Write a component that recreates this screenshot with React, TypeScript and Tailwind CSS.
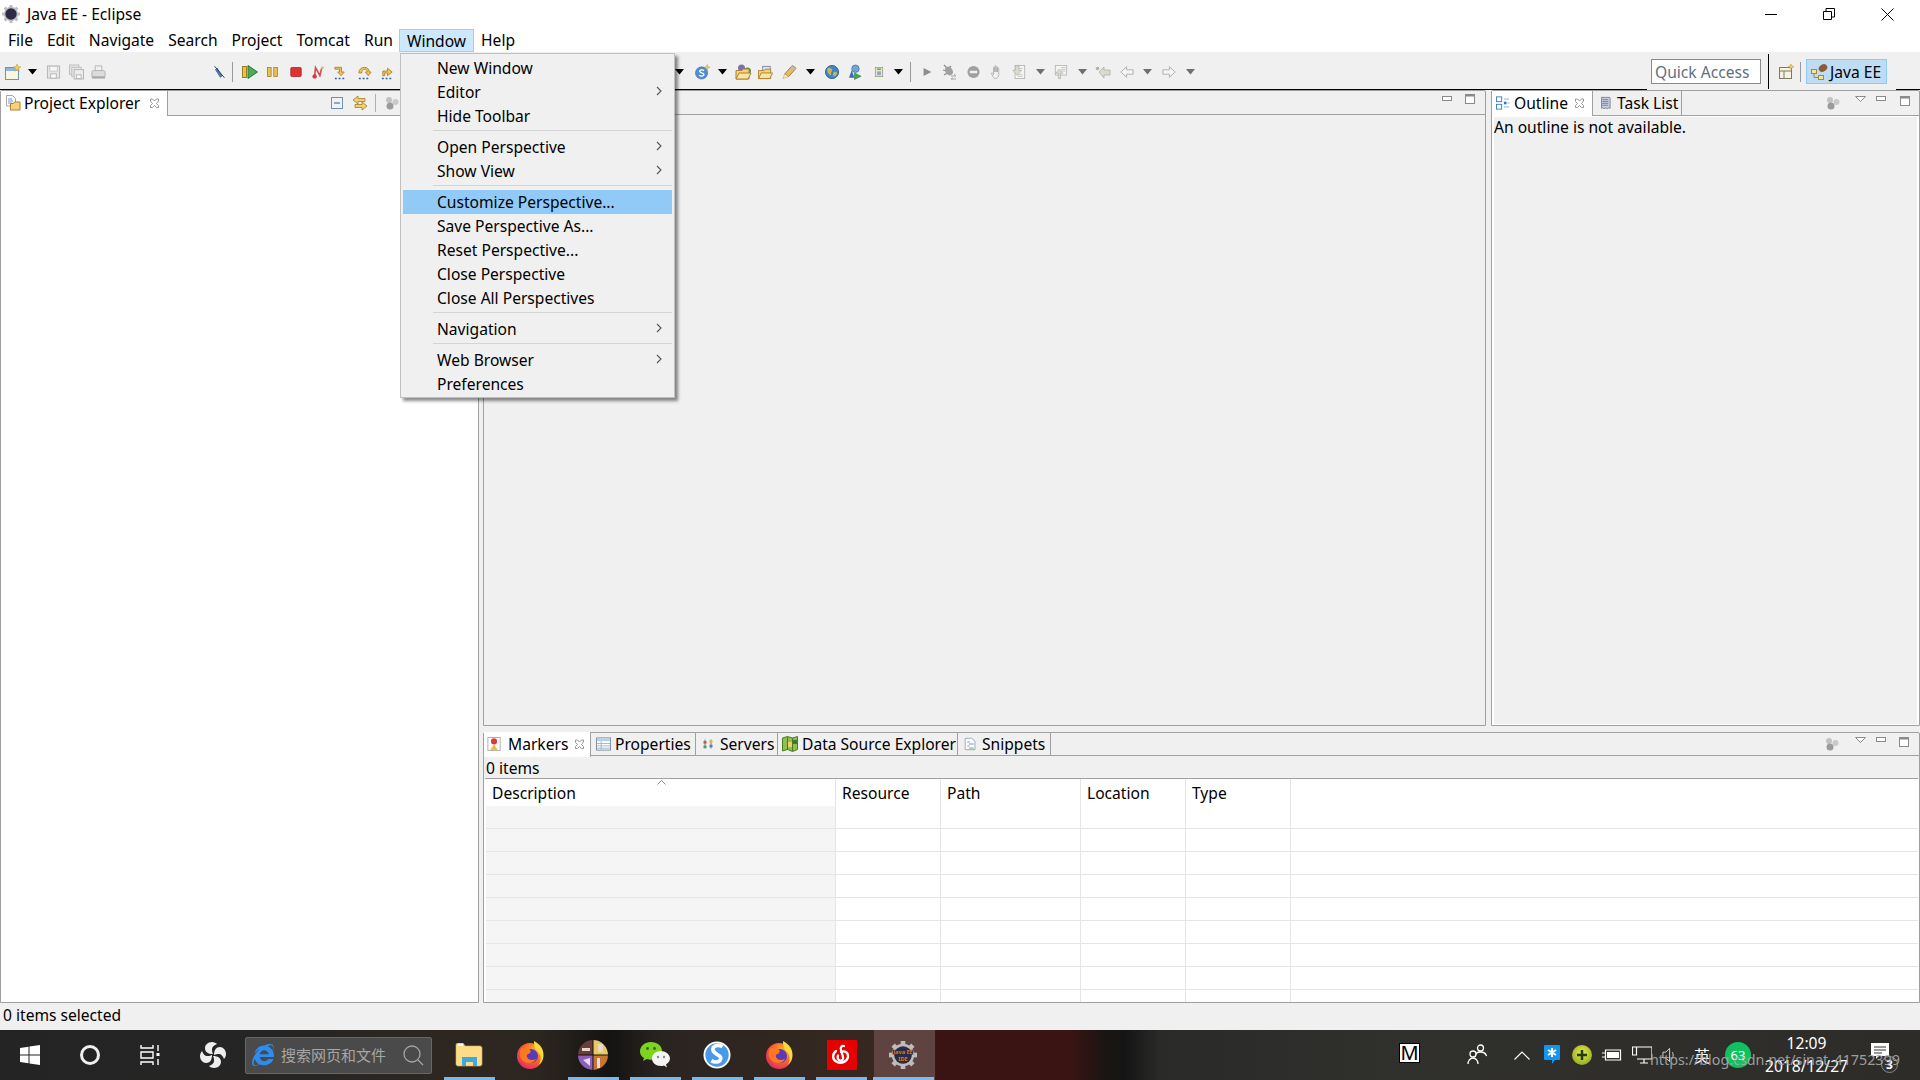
import React from "react";
import { FaInternetExplorer } from "react-icons/fa";

type P = { className?: string };
const Arrow = ({ className = "", grey = false }: P & { grey?: boolean }) => (
  <svg viewBox="0 0 9 6" className={"w-[9px] h-[6px] shrink-0 " + className}>
    <path d="M0 0h9L4.5 5.5z" fill={grey ? "#6f6f6f" : "#000"} />
  </svg>
);
const Box16 = ({ className = "", w = "w-[16px] h-[16px]", children }: P & { w?: string; children: React.ReactNode }) => (
  <svg viewBox="0 0 16 16" className={w + " shrink-0 " + className}>{children}</svg>
);
const NewIcon = ({ className }: P) => (
  <Box16 className={className}>
    <rect x="0.5" y="3.5" width="13" height="12" fill="#fbf6df" stroke="#6b93b5" />
    <rect x="1" y="4" width="12" height="3" fill="#8db8dc" />
    <path d="M12 0l1 2.5L15.8 3l-2.3 1.6.8 2.6L12 5.6 9.8 7.2l.7-2.6L8.4 3l2.6-.5z" fill="#f6cf57" stroke="#b8902a" strokeWidth=".5" />
  </Box16>
);
const Floppy = ({ className, w }: P & { w?: string }) => (
  <Box16 className={className} w={w ?? "w-[15px] h-[16px]"}>
    <rect x="1.5" y="1.5" width="13" height="13" fill="#e6e6e6" stroke="#b4b4b4" />
    <rect x="4" y="2" width="8" height="5" fill="#f6f6f6" stroke="#bcbcbc" strokeWidth=".7" />
    <rect x="5" y="10" width="6" height="4.5" fill="#fafafa" stroke="#b4b4b4" />
  </Box16>
);
const FloppyAll = ({ className }: P) => (
  <Box16 className={className} w="w-[15px] h-[16px]">
    <rect x=".5" y=".5" width="10" height="10" fill="#e6e6e6" stroke="#bcbcbc" />
    <rect x="3" y="3" width="10" height="10" fill="#e6e6e6" stroke="#bcbcbc" />
    <rect x="5.5" y="5.5" width="10" height="10" fill="#ececec" stroke="#b4b4b4" />
    <rect x="8" y="11" width="5" height="4" fill="#fafafa" stroke="#b4b4b4" />
  </Box16>
);
const Printer = ({ className }: P) => (
  <Box16 className={className} w="w-[15px] h-[16px]">
    <path d="M4.5 1.5h7v6h-7z" fill="#f1f1f1" stroke="#b4b4b4" />
    <path d="M1 8c0-1 1-1.500 2-1.500h10c1 0 2 .5 2 1.500v5H1z" fill="#dcdcdc" stroke="#b0b0b0" />
    <rect x="1" y="13" width="14" height="2" fill="#a9a9a9" />
  </Box16>
);
const SkipIcon = ({ className }: P) => (
  <Box16 className={className} w="w-[13px] h-[16px]">
    <path d="M5 3l6 10-2 1.500L3 5z" fill="#5a7fb0" stroke="#2b4e80" strokeWidth=".8" />
    <path d="M2 1l12 14" stroke="#1d3d70" strokeWidth="1.200" />
  </Box16>
);
const Resume = ({ className }: P) => (
  <Box16 className={className}>
    <rect x=".5" y="2.500" width="4" height="11" fill="#e9c14f" stroke="#9c7c22" />
    <path d="M6 1.500L15.500 8 6 14.500z" fill="#4caa58" stroke="#2a7b3a" />
  </Box16>
);
const Pause = ({ className }: P) => (
  <Box16 className={className} w="w-[12px] h-[16px]">
    <rect x=".5" y="2" width="5" height="12" fill="#e9c14f" stroke="#9c7c22" />
    <rect x="9" y="2" width="5" height="12" fill="#e9c14f" stroke="#9c7c22" />
  </Box16>
);
const Stop = ({ className }: P) => (
  <Box16 className={className} w="w-[12px] h-[16px]">
    <rect x="1" y="2" width="14" height="12" rx="1.500" fill="#dd3333" stroke="#a51f1f" />
  </Box16>
);
const Disconnect = ({ className }: P) => (
  <Box16 className={className} w="w-[14px] h-[16px]">
    <path d="M3 13L4 3l5 9 2-8" fill="none" stroke="#d34a4a" strokeWidth="1.800" />
    <circle cx="3" cy="13" r="2.500" fill="#d33" />
    <path d="M11 1l3 2-3 2z" fill="#e9a94f" />
  </Box16>
);
const Step = ({ className, d }: P & { d: string }) => (
  <Box16 className={className} w="w-[15px] h-[16px]">
    <path d={d} fill="#f0c364" stroke="#b5852a" strokeWidth="1" />
    <path d="M2 15h2M6 15h2M10 15h2" stroke="#2c5f9e" strokeWidth="1.500" />
  </Box16>
);
const BlueS = ({ className }: P) => (
  <Box16 className={className} w="w-[15px] h-[16px]">
    <circle cx="7" cy="9" r="6.500" fill="#4f8fd0" stroke="#2c64a4" strokeWidth=".6" />
    <path d="M9.500 6.500C8 5.200 4.800 5.500 5 7.500c.2 1.800 4.500 1 4.500 3.200 0 2-3.500 2.200-5 .8" fill="none" stroke="#fff" strokeWidth="1.500" />
    <path d="M13 0l.8 2.200L16 3l-2.200.8L13 6l-.8-2.200L10 3l2.200-.8z" fill="#f3cf5b" stroke="#a98523" strokeWidth=".4" />
  </Box16>
);
const FolderOpen = ({ className, w, extra }: P & { w?: string; extra?: React.ReactNode }) => (
  <Box16 className={className} w={w ?? "w-[17px] h-[16px]"}>
    {extra}
    <path d="M.5 6.500h6l1-1.500h6v10H.5z" fill="#f5d27c" stroke="#b0812e" />
    <path d="M.5 15l3-6h12l-3 6z" fill="#fbe3a3" stroke="#b0812e" />
  </Box16>
);
const Pencil = ({ className }: P) => (
  <Box16 className={className} w="w-[15px] h-[16px]">
    <path d="M3 10l8-9 4 3-8 9z" fill="#eab869" stroke="#9c7a3a" />
    <path d="M10 2l4 3" stroke="#bbb" strokeWidth="2" />
    <path d="M3 10l-2 5 6-2z" fill="#fff6b8" stroke="#aaa36b" strokeWidth=".6" />
  </Box16>
);
const Globe = ({ className }: P) => (
  <Box16 className={className} w="w-[14px] h-[16px]">
    <circle cx="8" cy="8" r="7.500" fill="#3f86c8" stroke="#2a5c92" />
    <path d="M4 3c2 0 3 1 4 2S6 9 7 11s-3 0-4-3 0-5 1-5zM10 8c2-1 3 0 4 1-1 3-3 4-4 4s-1-3 0-5z" fill="#c9b65a" />
  </Box16>
);
const Runner = ({ className }: P) => (
  <Box16 className={className} w="w-[15px] h-[16px]">
    <circle cx="9" cy="4.500" r="4" fill="#6ea6d6" stroke="#3b6b9d" strokeWidth=".7" />
    <path d="M2 14L5 6l3 8z" fill="#3a6eb0" />
    <path d="M8 9l7 3.500-7 3.500z" fill="#43a255" stroke="#2a7b3a" strokeWidth=".6" />
  </Box16>
);
const ServerI = ({ className }: P) => (
  <Box16 className={className} w="w-[10px] h-[16px]">
    <rect x="2" y="0.500" width="12" height="15" fill="#e7e4c8" stroke="#8a8a66" />
    <rect x="5" y="2.500" width="6" height="2" fill="#3da04f" />
    <rect x="5" y="7" width="6" height="6" fill="#8aa6d2" />
  </Box16>
);
const GPlay = ({ className }: P) => (
  <Box16 className={className} w="w-[9px] h-[16px]">
    <path d="M1 1l14 7-14 7z" fill="#8e8e8e" />
  </Box16>
);
const GBug = ({ className }: P) => (
  <Box16 className={className}>
    <path d="M2 1l4 4M1 6l3 1M2 11l3-2M9 2L7 4" stroke="#909090" strokeWidth="1.300" />
    <ellipse cx="7" cy="7" rx="3.500" ry="4.500" fill="#a0a0a0" transform="rotate(-35 7 7)" />
    <path d="M9 12h5l-2-2M14 15H9l2-1" stroke="#a5a5a5" fill="none" />
  </Box16>
);
const GMinus = ({ className }: P) => (
  <Box16 className={className} w="w-[13px] h-[16px]">
    <circle cx="8" cy="8" r="7.500" fill="#a0a0a0" />
    <rect x="3.500" y="6.500" width="9" height="3" fill="#f0f0f0" />
  </Box16>
);
const GHand = ({ className }: P) => (
  <Box16 className={className} w="w-[14px] h-[16px]">
    <path d="M4 9V3c0-1 1.500-1 1.500 0v5V1.500c0-1 1.500-1 1.500 0V8V2.500c0-1 1.500-1 1.500 0V8V4c0-1 1.500-1 1.500 0v7c0 3-2 4.500-4 4.500S4 14 2.500 11.500 1.500 9 2.500 9 4 11 4 11z" fill="#f0f0f0" stroke="#a8a8a8" strokeWidth=".9" />
  </Box16>
);
const GStep = ({ className }: P) => (
  <Box16 className={className} w="w-[14px] h-[16px]">
    <rect x="3.500" y=".5" width="11" height="15" fill="#f4f4f4" stroke="#b5b5b5" />
    <path d="M7 4h5M7 11h5M7 13h5" stroke="#c4c4c4" />
    <path d="M4 1v5H1l5 6 5-6H8V1z" fill="#dedacb" stroke="#a9a9a9" strokeWidth=".7" />
  </Box16>
);
const GStepUp = ({ className }: P) => (
  <Box16 className={className} w="w-[14px] h-[16px]">
    <rect x="1.500" y=".5" width="13" height="11" fill="#f4f4f4" stroke="#b5b5b5" />
    <path d="M8 3h5M8 5h5M8 7h5" stroke="#c4c4c4" />
    <path d="M5 15.500v-6H2l4-5 4 5H7.500v6z" fill="#dedacb" stroke="#a9a9a9" strokeWidth=".7" />
  </Box16>
);
const GBackDoc = ({ className }: P) => (
  <Box16 className={className}>
    <circle cx="2.500" cy="4.500" r="1.800" fill="#b0b0b0" />
    <path d="M4 8l5-5v3h6v5H9v3z" fill="#dedacb" stroke="#ababab" strokeWidth=".8" />
  </Box16>
);
const GLeft = ({ className }: P) => (
  <Box16 className={className} w="w-[14px] h-[16px]">
    <path d="M1 8l6.500-6v3.500H15v5H7.500V14z" fill="#f4f4f4" stroke="#a9a9a9" />
  </Box16>
);
const GRight = ({ className }: P) => (
  <Box16 className={className} w="w-[14px] h-[16px]">
    <path d="M15 8L8.500 2v3.500H1v5h7.500V14z" fill="#f4f4f4" stroke="#a9a9a9" />
  </Box16>
);
const Sep = ({ className = "" }: P) => <div className={"w-[1px] h-[20px] bg-[#9a9a9a] shrink-0 " + className} />;

const Close = ({ className = "" }: P) => (
  <svg viewBox="0 0 11 11" className={"w-[11px] h-[11px] shrink-0 " + className}>
    <path d="M1.500 1h2L5.500 3 7.500 1h2v2L7.500 5.500l2 2v2h-2L5.500 7.500l-2 2h-2v-2L3.500 5.500l-2-2z" fill="#fff" stroke="#8c8c8c" strokeWidth=".9" />
  </svg>
);
const Cogs = ({ className = "" }: P) => (
  <svg viewBox="0 0 14 14" className={"w-[14px] h-[14px] shrink-0 " + className}>
    <circle cx="4" cy="4" r="3" fill="#c2c2c2" />
    <circle cx="10.500" cy="6" r="3" fill="#c9c9c9" />
    <circle cx="5" cy="10" r="3.500" fill="#9b9b9b" />
  </svg>
);
const ViewMenu = ({ className = "" }: P) => (
  <svg viewBox="0 0 11 6" className={"w-[11px] h-[6px] shrink-0 " + className}>
    <path d="M.5.500h10L5.500 5.500z" fill="#fff" stroke="#8c8c8c" />
  </svg>
);
const Min = ({ className = "" }: P) => (
  <svg viewBox="0 0 10 5" className={"w-[10px] h-[5px] shrink-0 " + className}>
    <rect x=".5" y=".5" width="9" height="4" fill="#fff" stroke="#8a8a8a" />
  </svg>
);
const Max = ({ className = "" }: P) => (
  <svg viewBox="0 0 10 10" className={"w-[10px] h-[10px] shrink-0 " + className}>
    <rect x=".5" y=".5" width="9" height="9" fill="#fff" stroke="#8a8a8a" />
    <rect x="1" y="1" width="8" height="1.500" fill="#8a8a8a" />
  </svg>
);

const ExplorerIcon = ({ className }: P) => (
  <Box16 className={className}>
    <path d="M1.500.5h6l3 3V11h-9z" fill="#fff" stroke="#a5a5a5" />
    <path d="M3 4h4M3 6h5M3 8h4" stroke="#6f9dc8" />
    <path d="M5.500 8.500h3l1-1.500h5.500v8h-9.500z" fill="#f6d27a" stroke="#b0812e" />
  </Box16>
);
const OutlineIcon = ({ className }: P) => (
  <Box16 className={className} w="w-[14px] h-[16px]">
    <rect x=".5" y="1" width="6" height="5.500" fill="#fff" stroke="#2c78c4" />
    <rect x=".5" y="9.500" width="6" height="5.500" fill="#fff" stroke="#2c78c4" />
    <rect x="9" y="6.500" width="3" height="3" fill="#2c78c4" />
    <path d="M9 3.500h6M13 8h2.500M9 12.500h6" stroke="#7ba9d6" />
  </Box16>
);
const TaskIcon = ({ className }: P) => (
  <Box16 className={className} w="w-[12px] h-[16px]">
    <path d="M2 .5h10.500c1 0 1 .5 1 1V15l-2-.5-2 1-2-1-2 1-2-1-1.500.5V1.500c0-.5.5-1 1-1z" fill="#c9cde0" stroke="#686d80" />
    <path d="M3 3.500h8M3 6h8M3 8.500h8M3 11h8" stroke="#686d80" />
  </Box16>
);
const MarkersIcon = ({ className }: P) => (
  <Box16 className={className} w="w-[14px] h-[16px]">
    <rect x="1" y=".5" width="14" height="15" fill="#fdfdfd" stroke="#a8a8a8" />
    <circle cx="8" cy="5" r="3.500" fill="#e0383c" />
    <path d="M8 8l4.500 7h-9z" fill="#edbb4c" />
  </Box16>
);
const PropsIcon = ({ className }: P) => (
  <Box16 className={className} w="w-[15px] h-[16px]">
    <rect x=".5" y="1.500" width="15" height="13" fill="#fff" stroke="#7d8c9c" />
    <rect x="1" y="2" width="14" height="3" fill="#b8cfe8" />
    <path d="M1 7.500h14M1 10h14M1 12.500h14M5.500 5v9" stroke="#99b4d0" />
  </Box16>
);
const ServersIcon = ({ className }: P) => (
  <Box16 className={className} w="w-[12px] h-[16px]">
    <path d="M4 2v12M12 2v12" stroke="#55778f" strokeWidth="1.200" />
    <rect x="2" y="4" width="4" height="3.500" fill="#d6504e" />
    <rect x="2" y="10" width="4" height="3.500" fill="#4e9f52" />
    <rect x="10" y="3" width="4" height="3.500" fill="#e0b743" />
    <rect x="10" y="9" width="4" height="3.500" fill="#4e7fc4" />
  </Box16>
);
const DataIcon = ({ className }: P) => (
  <Box16 className={className}>
    <path d="M.5 2l5-1.500 5 1.500 5-1.500v13l-5 2-5-2-5 1.500z" fill="#8ec04f" stroke="#4d7a2a" />
    <path d="M5.500 1v13M10.500 2v13" stroke="#4d7a2a" />
    <rect x="6" y="6" width="4" height="5" fill="#e5d36a" />
    <rect x="11" y="4" width="4" height="4" fill="#3b7a35" />
  </Box16>
);
const SnippetsIcon = ({ className }: P) => (
  <Box16 className={className} w="w-[13px] h-[16px]">
    <path d="M1.500 1h8l4 3.500V15h-12z" fill="#fff" stroke="#8a9aa8" />
    <path d="M4 5.500h3M6 8h6" stroke="#3d7dc0" />
    <path d="M4 10.500h3" stroke="#d66" />
    <path d="M6 13h6" stroke="#3aa05a" />
  </Box16>
);

const Tab = ({ active, icon, label, close, closeGap = "ml-[7px]", className = "" }: { active?: boolean; icon: React.ReactNode; label: string; close?: boolean; closeGap?: string; className?: string }) => (
  <div className={"h-[24px] flex items-center shrink-0 border-r border-[#a0a0a0] " + (active ? "bg-white -mb-[1px] h-[25px] pb-[1px] " : "") + className}>
    {icon}
    <span className="whitespace-nowrap">{label}</span>
    {close && <Close className={closeGap} />}
  </div>
);

const ItemRow = ({ label, sub, hi }: { label: string; sub?: boolean; hi?: boolean }) => (
  <div className={"h-[24px] mx-[2px] pl-[34px] pr-[10px] flex items-center justify-between " + (hi ? "bg-[#91c9f7]" : "")}>
    <span className="whitespace-nowrap">{label}</span>
    {sub && (
      <svg viewBox="0 0 6 10" className="w-[6px] h-[10px] -mt-[2px]">
        <path d="M1 1l4 4-4 4" fill="none" stroke="#555" strokeWidth="1.100" />
      </svg>
    )}
  </div>
);
const MenuSep = () => <div className="mt-[2px] mb-[4px] h-[1px] ml-[32px] mr-[2px] bg-[#d4d4d4]" />;

const Gear = ({ className = "", tiny = false }: P & { tiny?: boolean }) => (
  <svg viewBox="0 0 30 30" className={className}>
    {[0, 45, 90, 135, 180, 225, 270, 315].map((a) => (
      <rect key={a} x="12.500" y="0" width="5" height="6" fill="#bdbdbd" transform={`rotate(${a} 15 15)`} />
    ))}
    <circle cx="15" cy="15" r="12" fill="#bdbdbd" />
    <circle cx="15" cy="15" r="9.500" fill="#2c2a45" />
    {tiny && (
      <>
        <rect x="4" y="9.500" width="22" height="5" fill="#2c2a45" />
        <text x="15" y="14" textAnchor="middle" fontSize="6" fontWeight="700" fill="#d97a1e">Java EE</text>
        <text x="15" y="21" textAnchor="middle" fontSize="6" fontWeight="700" fill="#d97a1e">IDE</text>
      </>
    )}
  </svg>
);
const Firefox = ({ className = "", id }: P & { id: string }) => (
  <svg viewBox="0 0 28 28" className={"w-[28px] h-[28px] shrink-0 " + className}>
    <defs>
      <radialGradient id={id} cx=".65" cy=".3" r=".9">
        <stop offset="0" stopColor="#ffb52c" />
        <stop offset=".5" stopColor="#ff5a2a" />
        <stop offset="1" stopColor="#c41d86" />
      </radialGradient>
    </defs>
    <circle cx="14" cy="15" r="13" fill={`url(#${id})`} />
    <path d="M18 0c6 3 10 8 9.500 15-.2 4-2 7-5 9 2-3 3-7 1-11-1-2-4-4-5-7-.4-2-.5-4-.5-6z" fill="#ffd93b" />
    <circle cx="15" cy="15" r="7" fill="#5b3bb5" />
    <path d="M6 7c2 1 5 0 7 1s2 3 1 4-4 1-3 4 5 4 9 2c-2 4-7 5-11 3S3 15 4 11c.3-1.500 1-3 2-4z" fill="#ff7a1f" />
  </svg>
);

const Panel = ({ className = "", children }: { className?: string; children: React.ReactNode }) => (
  <div className={"border border-[#a0a0a0] rounded-t-[2px] flex flex-col min-h-0 bg-[#f0f0f0] " + className}>{children}</div>
);

const Bar = ({ className = "" }: P) => <div className={"absolute bottom-0 w-[51px] h-[3px] bg-[#76b9ed] " + className} />;

export default function App() {
  const cols = ["w-[350px]", "w-[105px]", "w-[140px]", "w-[105px]", "w-[105px]"];
  const heads = ["Description", "Resource", "Path", "Location", "Type"];
  return (
    <div className="w-[1920px] h-[1080px] relative overflow-hidden flex flex-col bg-[#f0f0f0] text-black text-[15.6px] leading-[20px] [font-family:'Noto_Sans','Noto_Sans_CJK_SC',sans-serif]">
      {/* title bar */}
      <div className="h-[26px] bg-white flex items-center shrink-0 pt-[2px]">
        <Gear className="w-[18px] h-[18px] ml-[2px]" />
        <span className="ml-[7px]">Java EE - Eclipse</span>
        <svg viewBox="0 0 12 1" className="ml-auto w-[12px] h-[1px]"><rect width="12" height="1" fill="#000" /></svg>
        <svg viewBox="0 0 12 12" className="ml-[46px] w-[12px] h-[12px]"><path d="M.5 3.500h8v8h-8zM3 3.500V.5h8.500V9H8.500" fill="none" stroke="#000" /></svg>
        <svg viewBox="0 0 13 13" className="ml-[46px] mr-[26px] w-[13px] h-[13px]"><path d="M.5.500l12 12M12.500.5l-12 12" stroke="#000" /></svg>
      </div>
      {/* menu bar */}
      <div className="h-[26px] bg-white flex items-center pl-[1px] shrink-0">
        {["File", "Edit", "Navigate", "Search", "Project", "Tomcat", "Run"].map((m) => (
          <span key={m} className="px-[7px] mt-[2px]">{m}</span>
        ))}
        <span className="px-[7px] h-[23px] mt-[3px] flex items-center bg-[#cce8ff] border border-[#99d1ff] -ml-[1px]">Window</span>
        <span className="px-[7px] mt-[2px]">Help</span>
      </div>
      {/* toolbar */}
      <div className="h-[37px] flex items-center pt-[2px] shrink-0">
        <NewIcon className="ml-[5px]" />
        <Arrow className="ml-[7px]" />
        <Floppy className="ml-[9px]" />
        <FloppyAll className="ml-[8px]" />
        <Printer className="ml-[7px]" />
        <SkipIcon className="ml-[107px]" />
        <Sep className="ml-[6px]" />
        <Resume className="ml-[9px]" />
        <Pause className="ml-[9px]" />
        <Stop className="ml-[11px]" />
        <Disconnect className="ml-[10px]" />
        <Step className="ml-[7px]" d="M2 3h7v5h3l-3.500 4L5 8h2V5H2z" />
        <Step className="ml-[9px]" d="M2 9c0-4 3-6 6-6s5 2 5 5h2l-3 4-3-4h2c0-2-1-3-3-3s-3 2-3 4z" />
        <Step className="ml-[8px]" d="M3 12V7h5V4l5 4-5 4V9H5v3z" />
        <Arrow className="ml-[280px]" />
        <BlueS className="ml-[11px]" />
        <Arrow className="ml-[8px]" />
        <FolderOpen className="ml-[8px]" extra={<><circle cx="6" cy="4" r="3.500" fill="#7b6fb0" /><circle cx="12" cy="7" r="3.500" fill="#4a9a58" /></>} />
        <FolderOpen className="ml-[6px]" w="w-[15px] h-[16px]" extra={<rect x="5" y="2" width="8" height="6" fill="#dfe6f2" stroke="#7a8ba5" />} />
        <Pencil className="ml-[9px]" />
        <Arrow className="ml-[9px]" />
        <Globe className="ml-[10px]" />
        <Runner className="ml-[8px]" />
        <ServerI className="ml-[12px]" />
        <Arrow className="ml-[10px]" />
        <Sep className="ml-[7px]" />
        <GPlay className="ml-[12px]" />
        <GBug className="ml-[10px]" />
        <GMinus className="ml-[9px]" />
        <GHand className="ml-[10px]" />
        <GStep className="ml-[8px]" />
        <Arrow grey className="ml-[10px]" />
        <GStepUp className="ml-[9px]" />
        <Arrow grey className="ml-[10px]" />
        <GBackDoc className="ml-[8px]" />
        <GLeft className="ml-[9px]" />
        <Arrow grey className="ml-[9px]" />
        <GRight className="ml-[10px]" />
        <Arrow grey className="ml-[10px]" />
        <div className="ml-auto w-[110px] h-[25px] bg-white border border-[#8a8a8a] flex items-center pl-[3px] text-[#5f6f80]">Quick Access</div>
        <div className="ml-[7px] w-[1px] self-stretch bg-black" />
        <svg viewBox="0 0 15 16" className="ml-[10px] w-[15px] h-[16px]">
          <rect x=".5" y="3.500" width="12" height="11" fill="#f7f1dd" stroke="#7a7a66" />
          <path d="M1 7h11M5 7v7" stroke="#7a7a66" />
          <path d="M12 0l1 2 2 .8-2 .8-1 2-1-2-2-.8 2-.8z" fill="#f3cf5b" stroke="#a98523" strokeWidth=".4" />
        </svg>
        <Sep className="ml-[6px]" />
        <div className="ml-[5px] mr-[33px] w-[81px] h-[25px] bg-[#bfdcf5] border border-[#90c8f6] flex items-center pl-[4px]">
          <svg viewBox="0 0 17 16" className="w-[17px] h-[16px] shrink-0">
            <ellipse cx="12" cy="4" rx="4.500" ry="3.500" fill="#8a5a3a" transform="rotate(-30 12 4)" />
            <rect x=".5" y="5.500" width="5" height="4" fill="#f6e3a0" stroke="#a88a2c" />
            <rect x="7.500" y="11.500" width="5" height="4" fill="#f6e3a0" stroke="#a88a2c" />
            <path d="M3 10v3.500h4" stroke="#a88a2c" fill="none" />
          </svg>
          <span className="ml-[2px] pt-[1px] whitespace-nowrap">Java EE</span>
        </div>
      </div>
      <div className="h-[1px] flex shrink-0">
        <div className="w-[1647px] bg-black" />
        <div className="w-[249px]" />
        <div className="w-[24px] bg-black" />
      </div>
      {/* workbench */}
      <div className="flex-1 min-h-0 flex">
        <Panel className="w-[479px]">
          <div className="h-[25px] flex items-center border-b border-[#a0a0a0] shrink-0">
            <Tab active label="Project Explorer" close closeGap="ml-[9px]" icon={<ExplorerIcon className="ml-[4px] mr-[3px]" />} className="w-[167px]" />
            <svg viewBox="0 0 12 12" className="ml-[163px] w-[12px] h-[12px]">
              <rect x=".5" y=".5" width="11" height="11" fill="#eef3f8" stroke="#6f8fb0" />
              <path d="M3 6h6" stroke="#2f5f90" />
            </svg>
            <svg viewBox="0 0 16 16" className="ml-[9px] w-[16px] h-[16px]">
              <path d="M6 1L1 5l5 4V6.500h7v-3H6z" fill="#f3d06f" stroke="#a07d22" strokeWidth=".8" />
              <path d="M10 7l5 4-5 4v-2.500H3v-3h7z" fill="#f3d06f" stroke="#a07d22" strokeWidth=".8" />
            </svg>
            <div className="ml-[7px] w-[1px] h-[18px] bg-[#b0b0b0]" />
            <Cogs className="ml-[9px]" />
          </div>
          <div className="flex-1 bg-white" />
        </Panel>
        <div className="ml-[4px] flex-1 min-w-0 flex flex-col">
          <div className="h-[636px] flex shrink-0">
            <Panel className="w-[1003px]">
              <div className="h-[24px] border-b border-[#a0a0a0] flex items-center justify-end shrink-0 pb-[8px]">
                <Min />
                <Max className="ml-[13px] mr-[10px]" />
              </div>
              <div className="flex-1" />
            </Panel>
            <Panel className="ml-[5px] flex-1 min-w-0">
              <div className="h-[25px] flex items-center border-b border-[#a0a0a0] shrink-0">
                <Tab active label="Outline" close closeGap="ml-[6px]" icon={<OutlineIcon className="ml-[4px] mr-[4px]" />} className="w-[101px] h-[25px]" />
                <Tab label="Task List" icon={<TaskIcon className="ml-[7px] mr-[5px]" />} className="w-[89px]" />
                <Cogs className="ml-[144px] -mt-[1px]" />
                <ViewMenu className="ml-[15px] -mt-[9px]" />
                <Min className="ml-[10px] -mt-[9px]" />
                <Max className="ml-[14px] -mt-[5px]" />
              </div>
              <div className="flex-1 bg-white px-[2px] py-[1px] flex flex-col min-h-0">
                <div className="flex-1 bg-[#f0f0f0]">An outline is not available.</div>
              </div>
            </Panel>
          </div>
          <Panel className="mt-[6px] flex-1 min-h-0">
            <div className="h-[23px] flex items-center border-b border-[#a0a0a0] shrink-0">
              <Tab active label="Markers" close closeGap="ml-[6px]" icon={<MarkersIcon className="ml-[3px] mr-[7px]" />} className="w-[107px] pr-[5px] h-[24px]" />
              <Tab label="Properties" icon={<PropsIcon className="ml-[5px] mr-[4px]" />} className="w-[105px]" />
              <Tab label="Servers" icon={<ServersIcon className="ml-[6px] mr-[6px]" />} className="w-[82px]" />
              <Tab label="Data Source Explorer" icon={<DataIcon className="ml-[4px] mr-[4px]" />} className="w-[180px]" />
              <Tab label="Snippets" icon={<SnippetsIcon className="ml-[6px] mr-[5px]" />} className="w-[93px]" />
              <Cogs className="ml-[774px]" />
              <ViewMenu className="ml-[16px] -mt-[9px]" />
              <Min className="ml-[10px] -mt-[9px]" />
              <Max className="ml-[13px] -mt-[5px]" />
            </div>
            <div className="h-[22px] pl-[1px] mx-[1px] mt-[1px] bg-[#f0f0f0] flex items-center shrink-0 border-b border-[#a0a0a0]">0 items</div>
            <div className="flex-1 min-h-0 bg-white pl-[2px] pr-[1px] pb-[1px] overflow-hidden relative">
              <div className="h-[27px] flex">
                {heads.map((h, i) => (
                  <div key={h} className={cols[i] + " shrink-0 h-full pl-[6px] flex items-center border-r border-[#e5e5e5]"}>{h}</div>
                ))}
              </div>
              <svg viewBox="0 0 9 5" className="absolute left-[173px] top-[1px] w-[9px] h-[5px]"><path d="M.5 4.500L4.500.5l4 4" fill="none" stroke="#8a8a8a" /></svg>
              {[0, 1, 2, 3, 4, 5, 6, 7, 8].map((r) => (
                <div key={r} className="h-[23px] flex border-b border-[#e5e5e5]">
                  <div className="w-[350px] shrink-0 bg-[#f5f5f5] border-r border-[#e5e5e5]" />
                  <div className="w-[105px] shrink-0 border-r border-[#e5e5e5]" />
                  <div className="w-[140px] shrink-0 border-r border-[#e5e5e5]" />
                  <div className="w-[105px] shrink-0 border-r border-[#e5e5e5]" />
                  <div className="w-[105px] shrink-0 border-r border-[#e5e5e5]" />
                </div>
              ))}
            </div>
          </Panel>
        </div>
      </div>
      {/* status */}
      <div className="h-[27px] pl-[3px] pb-[3px] flex items-center shrink-0">0 items selected</div>
      {/* taskbar */}
      <div className="h-[50px] shrink-0 flex items-center text-white bg-[linear-gradient(90deg,#242424_0px,#262524_300px,#2e2720_450px,#2c2620_540px,#141312_610px,#2a2421_660px,#362820_860px,#3a2420_934px,#3a1313_936px,#3a1413_1070px,#1a1513_1105px,#151515_1125px,#2a2a29_1160px,#30302d_1400px,#2e2c29_1920px)]">
        <svg viewBox="0 0 20 20" className="ml-[20px] w-[20px] h-[20px] shrink-0">
          <path d="M0 3l8.500-1.200V9.500H0zM9.500 1.600L20 0v9.500H9.500zM0 10.500h8.500v7.700L0 17zM9.500 10.500H20V20L9.500 18.400z" fill="#fff" />
        </svg>
        <div className="ml-[40px] w-[20px] h-[20px] rounded-full border-[3px] border-[#f0f0f0] shrink-0" />
        <svg viewBox="0 0 20 20" className="ml-[40px] w-[20px] h-[20px] shrink-0">
          <path d="M1 0v3h12V0M1 20v-3h12v3M1 7h12v6H1zM18 0v6M18 14v6" fill="none" stroke="#fff" strokeWidth="1.400" />
          <rect x="16.500" y="8" width="3" height="3" fill="#fff" />
        </svg>
        <svg viewBox="0 0 26 26" className="ml-[40px] w-[26px] h-[26px] shrink-0">
          <path d="M13 12C8 12 5 10 5 6c0-3 3-6 7-6 2 0 4 1 5 2-3 1-5 3-5 5 0 2 0 3 1 5zM14 13c0-5 2-8 6-8 3 0 6 3 6 7 0 2-1 4-2 5-1-3-3-5-5-5-2 0-3 0-5 1zM13 14c5 0 8 2 8 6 0 3-3 6-7 6-2 0-4-1-5-2 3-1 5-3 5-5 0-2 0-3-1-5zM12 13c0 5-2 8-6 8-3 0-6-3-6-7 0-2 1-4 2-5 1 3 3 5 5 5 2 0 3 0 5-1z" fill="#ededed" />
        </svg>
        <div className="ml-[19px] w-[187px] h-[37px] bg-[#4a4a4a] border border-[#666] rounded-[2px] flex items-center shrink-0">
          <FaInternetExplorer className="ml-[6px] w-[22px] h-[22px] text-[#2e8df0] shrink-0" />
          <span className="ml-[7px] w-[105px] text-[15px] text-[#a6a6a6] whitespace-nowrap">搜索网页和文件</span>
          <svg viewBox="0 0 21 21" className="ml-[17px] w-[21px] h-[21px] shrink-0">
            <circle cx="9" cy="9" r="8" fill="none" stroke="#a6a6a6" strokeWidth="1.300" />
            <path d="M15 15l5 5" stroke="#a6a6a6" strokeWidth="1.300" />
          </svg>
        </div>
        <svg viewBox="0 0 28 24" className="ml-[23px] w-[28px] h-[24px] shrink-0">
          <path d="M1 2c0-1 1-2 2-2h5l2 3h15c1 0 2 1 2 2v16c0 1-1 2-2 2H3c-1 0-2-1-2-2z" fill="#fbdd87" stroke="#d8b65f" strokeWidth=".6" />
          <path d="M7 14h15v9h-4v-4h-7v4H7z" fill="#3ea8e0" />
          <rect x="3" y="1" width="5" height="2" fill="#fff" />
        </svg>
        <Firefox id="ff1" className="ml-[33px]" />
        <svg viewBox="0 0 30 30" className="ml-[34px] w-[30px] h-[30px] shrink-0">
          <path d="M15 0a15 15 0 0 0-15 15h15z" fill="#6b3d3a" />
          <path d="M15 0a15 15 0 0 1 15 15H15z" fill="#e9c95f" />
          <path d="M0 15a15 15 0 0 0 15 15V15z" fill="#8d5fb8" />
          <path d="M30 15a15 15 0 0 1-15 15V15z" fill="#c8762e" />
          <path d="M4 8h8v3H4zM20 4h5v8h-5z" fill="#e8d8c8" />
          <path d="M5 20l7 6V18zM19 18h3v10h-3z" fill="#e8d8f0" />
          <path d="M15 0v30M0 15h30" stroke="#111" strokeWidth="1" />
        </svg>
        <svg viewBox="0 0 30 26" className="ml-[32px] w-[30px] h-[26px] shrink-0">
          <path d="M11 0C5 0 0 4 0 9.500c0 3 1.500 5 4 6.500l-1 3 4-2c1 .4 3 .7 4 .7 6 0 11-3.500 11-8.700S17 0 11 0z" fill="#7ed321" />
          <circle cx="7.500" cy="6.500" r="1.400" fill="#2a6a10" />
          <circle cx="14.500" cy="6.500" r="1.400" fill="#2a6a10" />
          <path d="M21 9c-5 0-9 3-9 7.500S16 24 21 24c1 0 2 0 3-.5l3 2-1-3c2-1.500 4-3.500 4-6 0-4.500-5-7.500-9-7.500z" fill="#f4f4f4" />
          <circle cx="18" cy="15" r="1.200" fill="#888" />
          <circle cx="24" cy="15" r="1.200" fill="#888" />
        </svg>
        <svg viewBox="0 0 30 30" className="ml-[33px] w-[28px] h-[28px] shrink-0">
          <circle cx="15" cy="15" r="14.500" fill="#fff" />
          <circle cx="15" cy="15" r="12.500" fill="#4799ea" />
          <path d="M21 6c-3-2-8-2-10 1-2 4 2 6 5 8 3 1 4 4 2 6-2 2-6 2-9 0" fill="none" stroke="#fff" strokeWidth="4" />
        </svg>
        <Firefox id="ff2" className="ml-[34px]" />
        <div className="ml-[34px] w-[30px] h-[30px] bg-[#e60000] flex items-center justify-center shrink-0">
          <svg viewBox="0 0 24 24" className="w-[24px] h-[24px]">
            <path d="M14 3c-2-.5-4 1-3 4l2 7c.5 2-1 4-3 3.500S7 15 8 12.500M6 8c-4 3-4 9 1 11 4 2 10 0 11-5 .5-4-3-7-7-5" fill="none" stroke="#fff" strokeWidth="2.300" strokeLinecap="round" />
          </svg>
        </div>
        <div className="ml-[17px] w-[61px] h-full bg-[#5f4340] flex items-center justify-center shrink-0 pr-[3px]">
          <Gear tiny className="w-[28px] h-[28px]" />
        </div>
        <div className="ml-[464px] w-[21px] h-[20px] bg-white border border-black flex items-center justify-center text-black text-[20px] leading-none shrink-0 -mt-[4px]">M</div>
        <svg viewBox="0 0 20 20" className="ml-[47px] w-[20px] h-[20px] shrink-0 -mt-[2px]">
          <circle cx="13.500" cy="4" r="3" fill="none" stroke="#fff" strokeWidth="1.300" />
          <path d="M8 13c0-3 2-5 5.500-5S19 10 19.500 12" fill="none" stroke="#fff" strokeWidth="1.300" />
          <circle cx="6" cy="10" r="3" fill="#2c2b28" stroke="#fff" strokeWidth="1.300" />
          <path d="M1 20c0-3 2-6 5-6s5 3 5 6" fill="none" stroke="#fff" strokeWidth="1.300" />
        </svg>
        <svg viewBox="0 0 16 9" className="ml-[27px] w-[16px] h-[9px] shrink-0">
          <path d="M.5 8.500L8 1l7.500 7.500" fill="none" stroke="#fff" strokeWidth="1.200" />
        </svg>
        <svg viewBox="0 0 16 20" className="ml-[14px] w-[16px] h-[20px] shrink-0">
          <path d="M1 0h14c1 0 1 1 1 1v13c0 1-1 1-1 1h-4l-3 4v-4H1c-1 0-1-1-1-1V1s0-1 1-1z" fill="#1296f0" />
          <path d="M8 3v9M4 5l8 5M12 5l-8 5" stroke="#fff" strokeWidth="2" />
        </svg>
        <svg viewBox="0 0 20 20" className="ml-[12px] w-[20px] h-[20px] shrink-0">
          <defs>
            <radialGradient id="q" cx=".5" cy=".4" r=".7"><stop offset="0" stopColor="#f3e64a" /><stop offset="1" stopColor="#7fa81c" /></radialGradient>
          </defs>
          <circle cx="10" cy="10" r="10" fill="url(#q)" />
          <path d="M10 5v10M5 10h10" stroke="#1d3d12" strokeWidth="2.500" />
        </svg>
        <svg viewBox="0 0 20 14" className="ml-[10px] w-[20px] h-[14px] shrink-0">
          <path d="M3.500 2h15v10h-15zM0 5h3M0 9h3" fill="none" stroke="#fff" strokeWidth="1.200" />
          <rect x="5" y="4" width="12" height="6" fill="#fff" />
        </svg>
        <svg viewBox="0 0 20 18" className="ml-[10px] w-[20px] h-[18px] shrink-0">
          <path d="M5 1h15v12H5M.5 1h4v8h-4zM12 13v4M8 17h8" fill="none" stroke="#fff" strokeWidth="1.200" />
        </svg>
        <svg viewBox="0 0 20 16" className="ml-[10px] w-[19px] h-[16px] shrink-0">
          <path d="M1 5h3l4-4v14l-4-4H1z" fill="none" stroke="#d8d8d8" />
          <path d="M11 5c1 2 1 4 0 6" fill="none" stroke="#d8d8d8" />
        </svg>
        <span className="ml-[13px] w-[17px] text-[16px] leading-none shrink-0 [font-family:'Noto_Sans_CJK_SC',sans-serif]">英</span>
        <div className="ml-[14px] w-[26px] h-[26px] rounded-full bg-[#10c15f] flex items-center justify-center text-[13px] shrink-0">63</div>
        <div className="ml-[14px] w-[83px] flex flex-col items-center shrink-0 text-[15.6px] leading-[23px]">
          <span>12:09</span>
          <span className="whitespace-nowrap">2018/12/27</span>
        </div>
        <svg viewBox="0 0 18 16" className="ml-[23px] w-[18px] h-[16px] shrink-0 -mt-[8px]">
          <path d="M0 0h18v13H8l-3 3v-3H0z" fill="#fff" />
          <path d="M3 4h12M3 7h12M3 10h8" stroke="#333" />
        </svg>
        <div className="absolute left-[1881px] top-[1056px] w-[17px] h-[17px] rounded-full bg-[#333] border border-[#888] text-[12px] leading-[15px] font-bold text-center">3</div>
        <div className="absolute left-[1650px] top-[1049px] whitespace-nowrap text-[14.3px] text-[#aaaaaa] opacity-90 leading-[22px]">https://blog.csdn.net/sinat_41752399</div>
        <Bar className="left-[444px]" />
        <Bar className="left-[568px]" />
        <Bar className="left-[630px]" />
        <Bar className="left-[692px]" />
        <Bar className="left-[754px]" />
        <Bar className="left-[816px]" />
        <Bar className="left-[873px] !w-[61px] !bg-[#7bbcf0]" />
      </div>
      {/* window menu */}
      <div className="absolute left-[400px] top-[53px] w-[275px] bg-[#f0f0f0] border border-[#c0c0c0] pt-[2px] pb-[1px] shadow-[3px_3px_3px_rgba(0,0,0,0.45)]">
        <ItemRow label="New Window" />
        <ItemRow label="Editor" sub />
        <ItemRow label="Hide Toolbar" />
        <MenuSep />
        <ItemRow label="Open Perspective" sub />
        <ItemRow label="Show View" sub />
        <MenuSep />
        <ItemRow label="Customize Perspective..." hi />
        <ItemRow label="Save Perspective As..." />
        <ItemRow label="Reset Perspective..." />
        <ItemRow label="Close Perspective" />
        <ItemRow label="Close All Perspectives" />
        <MenuSep />
        <ItemRow label="Navigation" sub />
        <MenuSep />
        <ItemRow label="Web Browser" sub />
        <ItemRow label="Preferences" />
      </div>
    </div>
  );
}
